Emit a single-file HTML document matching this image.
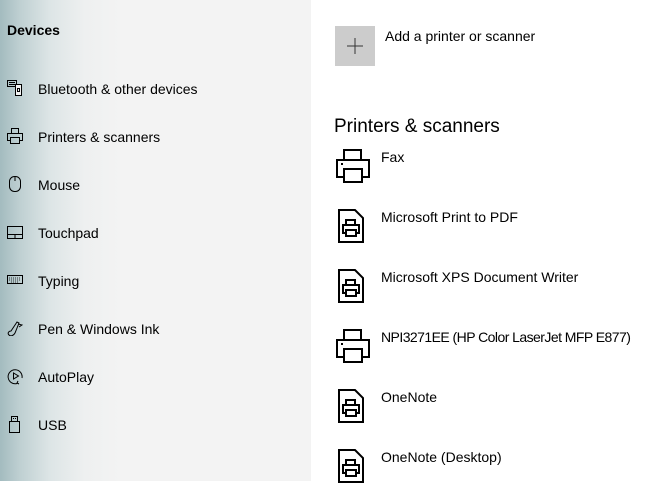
<!DOCTYPE html>
<html><head><style>
body{margin:0;width:664px;height:481px;overflow:hidden;font-family:"Liberation Sans",sans-serif;background:#fff;position:relative;color:#000}
#side{position:absolute;left:0;top:0;width:311px;height:481px;background:linear-gradient(90deg,#a3bbbf 0px,#bfd0d2 20px,#dde5e6 50px,#eef0f0 85px,#f3f3f3 120px,#f3f3f3 100%)}
.t{position:absolute;font-size:14px;white-space:nowrap}
.ic{position:absolute}
</style></head><body>
<div id="side"></div>
<div class="t" style="left:7px;top:22px;font-weight:bold;font-size:14px">Devices</div>

<svg class="ic" style="left:7px;top:80px" width="16" height="16" viewBox="0 0 16 16" fill="none" stroke="#000" stroke-width="1"><rect x="0.5" y="0.5" width="9" height="6"/><path d="M2 2.5h6M2 4.5h6"/><rect x="8.5" y="4.5" width="6" height="11" fill="#f3f3f3"/><rect x="10.5" y="8.5" width="2" height="3"/></svg>
<div class="t" style="left:38px;top:81px">Bluetooth &amp; other devices</div>

<svg class="ic" style="left:7px;top:128px" width="16" height="16" viewBox="0 0 16 16" fill="none" stroke="#000"><path d="M4.5 5V0.5h7V5M3.5 12.5H0.5V5.5h15v7h-3"/><rect x="3.5" y="9.5" width="9" height="6"/></svg>
<div class="t" style="left:38px;top:129px">Printers &amp; scanners</div>

<svg class="ic" style="left:9px;top:176px" width="12" height="16" viewBox="0 0 12 16" fill="none" stroke="#000"><rect x="0.5" y="0.5" width="11" height="15" rx="5"/><path d="M6 1v4"/></svg>
<div class="t" style="left:38px;top:177px">Mouse</div>

<svg class="ic" style="left:7px;top:226px" width="16" height="13" viewBox="0 0 16 13" fill="none" stroke="#000"><rect x="0.5" y="0.5" width="15" height="12"/><path d="M0.5 8.5h15M8 8.5v4"/></svg>
<div class="t" style="left:38px;top:225px">Touchpad</div>

<svg class="ic" style="left:7px;top:275px" width="16" height="9" viewBox="0 0 16 9" fill="none" stroke="#000"><rect x="0.5" y="0.5" width="15" height="8"/><path d="M2 3h12M2 5h12M4 7h8" stroke-width="0.8" stroke-dasharray="1 1"/></svg>
<div class="t" style="left:38px;top:273px">Typing</div>

<svg class="ic" style="left:7px;top:320px" width="16" height="16" viewBox="0 0 16 16" fill="none" stroke="#000"><path d="M2 15c-2-2 0-4 2-4l6-9 2 1-4 10c-1 2-4 4-6 2zM11 4l4 1-3 2"/></svg>
<div class="t" style="left:38px;top:321px">Pen &amp; Windows Ink</div>

<svg class="ic" style="left:7px;top:368px" width="17" height="17" viewBox="0 0 17 17" fill="none" stroke="#000"><path d="M10 15.5A7 7 0 1 1 15 10"/><path d="M6.5 5v6l5-3z"/><path d="M12 16l-2-1 1-2"/></svg>
<div class="t" style="left:38px;top:369px">AutoPlay</div>

<svg class="ic" style="left:9px;top:416px" width="11" height="17" viewBox="0 0 11 17" fill="none" stroke="#000"><rect x="2.5" y="0.5" width="6" height="5"/><rect x="0.5" y="5.5" width="10" height="11"/><path d="M4 2.5h1M6 2.5h1"/></svg>
<div class="t" style="left:38px;top:417px">USB</div>

<div style="position:absolute;left:335px;top:26px;width:40px;height:40px;background:#cccccc"></div>
<svg class="ic" style="left:346px;top:37px" width="18" height="18" viewBox="0 0 18 18" stroke="#333" stroke-width="1"><path d="M9 1v16M1 9h16"/></svg>
<div class="t" style="left:385px;top:28px">Add a printer or scanner</div>

<div class="t" style="left:334px;top:116px;font-size:19px">Printers &amp; scanners</div>

<svg class="ic" style="left:336px;top:149px" width="34" height="34" viewBox="0 0 34 34" fill="none" stroke="#000" stroke-width="2"><path d="M8 10V1h17v9M8 28H1V11h32v17h-7"/><rect x="8" y="20" width="18" height="13"/><path d="M5 15h2"/></svg>
<div class="t" style="left:381px;top:149px">Fax</div>

<svg class="ic" style="left:338px;top:209px" width="26" height="34" viewBox="0 0 26 34" fill="none" stroke="#000" stroke-width="2"><path d="M1 1h16l8 8v24H1z"/><path d="M8 16v-5h9v5M8 24H5v-8h16v8h-3"/><rect x="8" y="21" width="10" height="6"/></svg>
<div class="t" style="left:381px;top:209px">Microsoft Print to PDF</div>

<svg class="ic" style="left:338px;top:269px" width="26" height="34" viewBox="0 0 26 34" fill="none" stroke="#000" stroke-width="2"><path d="M1 1h16l8 8v24H1z"/><path d="M8 16v-5h9v5M8 24H5v-8h16v8h-3"/><rect x="8" y="21" width="10" height="6"/></svg>
<div class="t" style="left:381px;top:269px">Microsoft XPS Document Writer</div>

<svg class="ic" style="left:336px;top:329px" width="34" height="34" viewBox="0 0 34 34" fill="none" stroke="#000" stroke-width="2"><path d="M8 10V1h17v9M8 28H1V11h32v17h-7"/><rect x="8" y="20" width="18" height="13"/><path d="M5 15h2"/></svg>
<div class="t" style="left:381px;top:329px;letter-spacing:-0.55px">NPI3271EE (HP Color LaserJet MFP E877)</div>

<svg class="ic" style="left:338px;top:389px" width="26" height="34" viewBox="0 0 26 34" fill="none" stroke="#000" stroke-width="2"><path d="M1 1h16l8 8v24H1z"/><path d="M8 16v-5h9v5M8 24H5v-8h16v8h-3"/><rect x="8" y="21" width="10" height="6"/></svg>
<div class="t" style="left:381px;top:389px">OneNote</div>

<svg class="ic" style="left:338px;top:449px" width="26" height="34" viewBox="0 0 26 34" fill="none" stroke="#000" stroke-width="2"><path d="M1 1h16l8 8v24H1z"/><path d="M8 16v-5h9v5M8 24H5v-8h16v8h-3"/><rect x="8" y="21" width="10" height="6"/></svg>
<div class="t" style="left:381px;top:449px">OneNote (Desktop)</div>
</body></html>
